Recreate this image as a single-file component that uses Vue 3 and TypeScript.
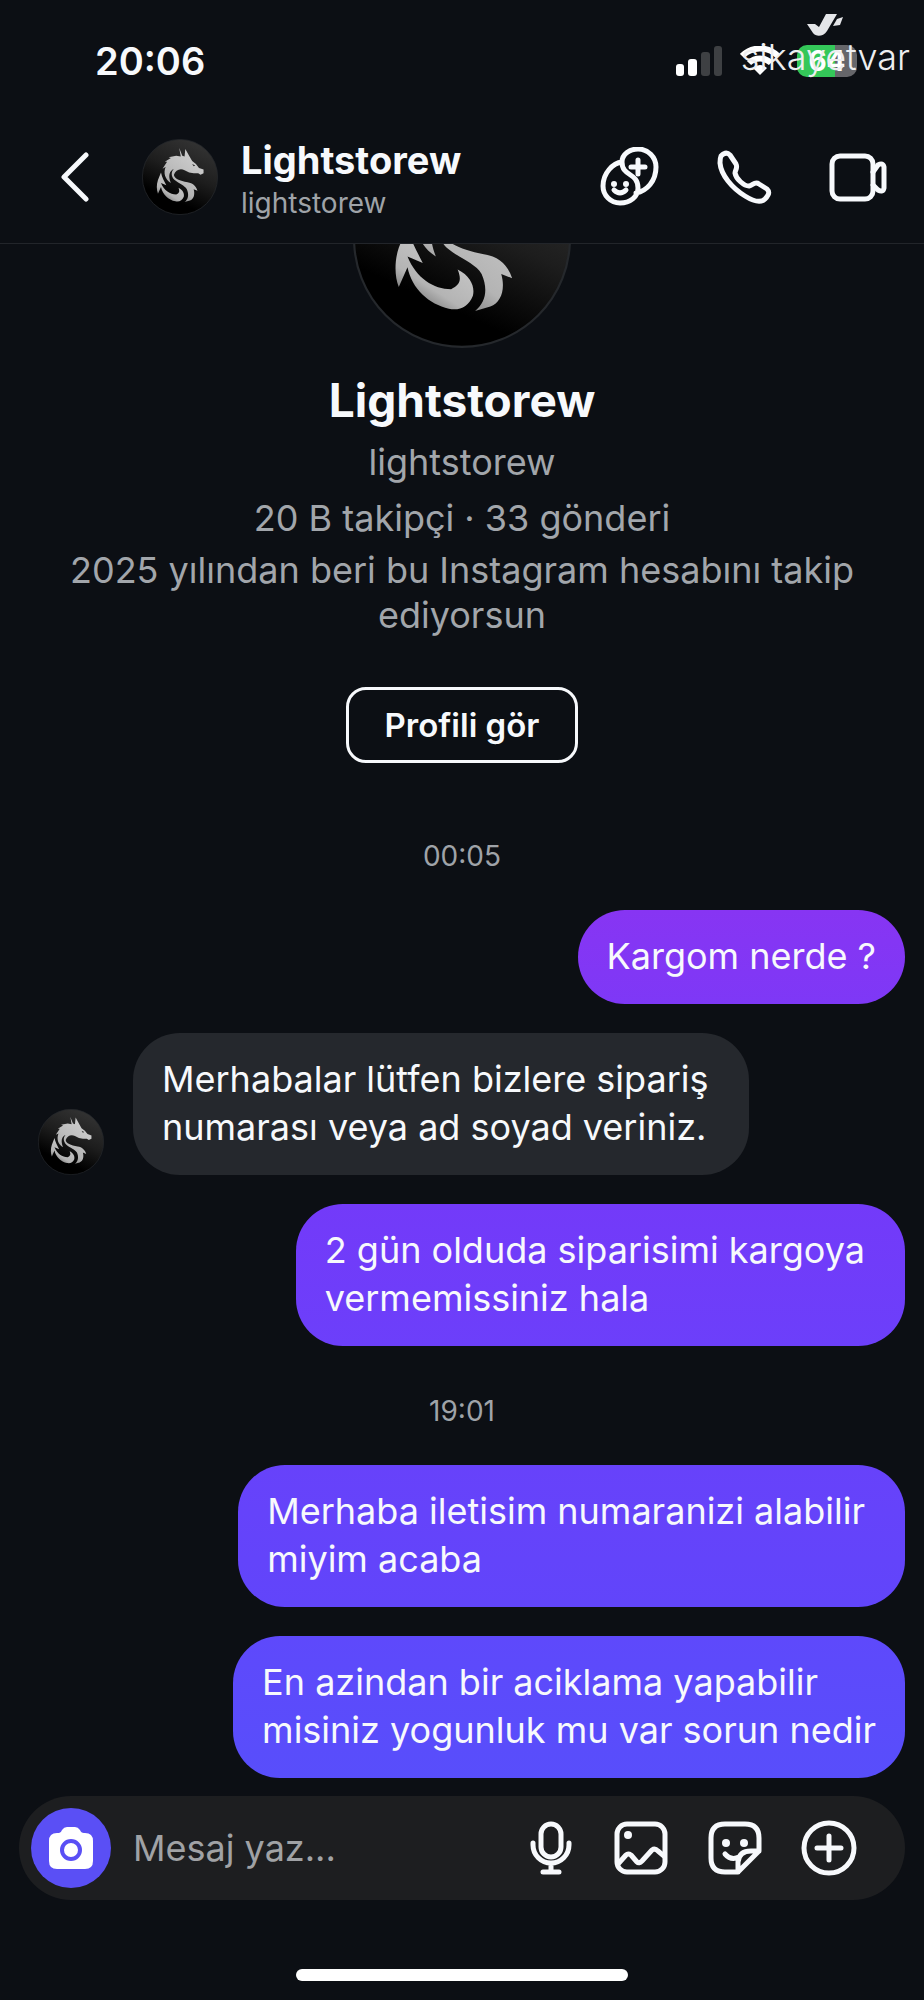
<script setup lang="ts">
import { ref } from 'vue'

interface Message {
  text: string
  mine: boolean
  tone: string
  roomy?: boolean
}
interface Group {
  time: string
  messages: Message[]
}

const draft = ref('')

const groups: Group[] = [
  {
    time: '00:05',
    messages: [
      { text: 'Kargom nerde ?', mine: true, tone: 'violet' },
      { text: 'Merhabalar lütfen bizlere sipariş\nnumarası veya ad soyad veriniz.', mine: false, tone: 'gray', roomy: true },
      { text: '2 gün olduda siparisimi kargoya\nvermemissiniz hala', mine: true, tone: 'purple', roomy: true },
    ],
  },
  {
    time: '19:01',
    messages: [
      { text: 'Merhaba iletisim numaranizi alabilir\nmiyim acaba', mine: true, tone: 'indigo', roomy: true },
      { text: 'En azindan bir aciklama yapabilir\nmisiniz yogunluk mu var sorun nedir', mine: true, tone: 'blue' },
    ],
  },
]
</script>

<template>
  <div class="phone">
    <svg class="defs" aria-hidden="true">
      <defs>
        <linearGradient id="disc" x1="0.75" y1="0" x2="0.3" y2="1">
          <stop offset="0" stop-color="#353535" />
          <stop offset="0.45" stop-color="#1d1d1d" />
          <stop offset="0.8" stop-color="#000" />
        </linearGradient>
        <linearGradient id="silver" x1="0.8" y1="0" x2="0.2" y2="1">
          <stop offset="0" stop-color="#d2d2d2" />
          <stop offset="0.7" stop-color="#b4b4b4" />
          <stop offset="1" stop-color="#666" />
        </linearGradient>
        <symbol id="dragon" viewBox="0 0 100 100">
          <circle cx="50" cy="50" r="49.5" fill="url(#disc)" stroke="#25282c" stroke-width="1" />
          <g fill="url(#silver)">
            <path d="M49 12 53 22 56 23 57 13 62 22 66 29 71 33 75 38 81 40 81 45 77 47 74 45 68 45 62 44 56 41C50 38 44 41 42 47 42 52 50 55 60 57 67 58 71 62 73 68L68 66C70 73 68 79 63 81L56 83C61 79 62 73 59 66 56 61 49 59 43 54 38 49 38 43 42 39 36 42 34 48 38 58 30 53 28 45 31 37L27 39 33 30 30 30 38 25 35 24 45 22 51 23Z" />
            <path d="M25 44C26 50 29 55 32 61L25 58C29 68 37 73 45 73 49 71 50 69 48 64 54 67 56 72 55 76 53 81 49 83 44 82 35 80 27 73 25 63L21 72C19 67 19 60 21 54Z" />
          </g>
          <path d="M66 33 70 35 68 36Z" fill="#222" />
        </symbol>
      </defs>
    </svg>

    <div class="status">
      <span class="clock">20:06</span>
      <div class="indicators">
        <svg class="signal" viewBox="0 0 48 32" aria-label="Signal">
          <rect x="1" y="19" width="8" height="12" rx="3" fill="#fff" />
          <rect x="13" y="14" width="9" height="17" rx="3" fill="#fff" />
          <rect x="26" y="7" width="9" height="24" rx="3" fill="#3e4043" />
          <rect x="39" y="1" width="8" height="30" rx="3" fill="#3e4043" />
        </svg>
        <svg class="wifi" viewBox="0 0 40 30" aria-label="Wi-Fi">
          <g fill="none" stroke="#fff" stroke-width="6">
            <path d="M2 10C12 0 28 0 38 10" />
            <path d="M9 17C15 11 25 11 31 17" />
          </g>
          <path d="M13 22Q20 16 27 22L20 29Z" fill="#fff" />
        </svg>
        <span class="battery">64</span>
      </div>
      <div class="watermark">
        <svg class="mark" viewBox="0 0 38 24" aria-hidden="true">
          <path d="M1 11H9L13 14 20 1H31L21 18C17 24 10 24 7 20Z" fill="#e4e5e8" />
          <path d="M31 6 37 4 34 12 27 13Z" fill="#e4e5e8" />
        </svg>
        <span>sikayetvar</span>
      </div>
    </div>

    <header class="header">
      <button class="icon back" aria-label="Geri">
        <svg viewBox="0 0 28 50"><path d="M25 3 3 25 25 47" /></svg>
      </button>
      <svg class="avatar"><use href="#dragon" /></svg>
      <div class="who">
        <h1>Lightstorew</h1>
        <p>lightstorew</p>
      </div>
      <div class="actions">
        <button class="icon" aria-label="Çıkartma">
          <svg viewBox="0 0 60 60">
            <path d="M22 15C22 7 30 2 38 2A18 18 0 0 1 56 20C56 34 47 44 36 46M22 15C13 16 3 26 3 39A17 17 0 0 0 20 56C30 56 38 50 38 41 38 25 22 30 22 15Z" />
            <path d="M38 13V27M31 20H45M14 43Q20 49 26 43" />
            <circle class="dot" cx="14" cy="37" r="3" /><circle class="dot" cx="26" cy="37" r="3" />
          </svg>
        </button>
        <button class="icon" aria-label="Sesli arama">
          <svg viewBox="0 0 60 60"><path d="M7 9C10 6 13 5 16 8L22 17C24 21 21 23 21 26 22 32 30 39 35 39 39 38 41 34 45 37L53 42C56 45 55 48 51 52 47 56 39 54 31 49 18 41 7 28 6 16Q6 11 7 9Z" /></svg>
        </button>
        <button class="icon" aria-label="Görüntülü arama">
          <svg viewBox="0 0 60 60"><rect x="4" y="9" width="41" height="43" rx="8" /><path d="M45 25 50 18Q55 15 56 20V41Q55 46 50 43L45 38" /></svg>
        </button>
      </div>
    </header>

    <main class="thread">
      <section class="profile">
        <svg class="portrait"><use href="#dragon" /></svg>
        <h2>Lightstorew</h2>
        <p class="handle">lightstorew</p>
        <p class="stats">20 B takipçi · 33 gönderi</p>
        <p class="since">2025 yılından beri bu Instagram hesabını takip ediyorsun</p>
        <button class="view">Profili gör</button>
      </section>

      <section v-for="group in groups" :key="group.time" class="group">
        <time>{{ group.time }}</time>
        <div v-for="message in group.messages" :key="message.text" class="row" :class="{ mine: message.mine }">
          <svg v-if="!message.mine" class="mini"><use href="#dragon" /></svg>
          <p class="bubble" :class="[message.tone, { roomy: message.roomy }]">{{ message.text }}</p>
        </div>
      </section>
    </main>

    <form class="composer" @submit.prevent>
      <button type="button" class="camera" aria-label="Kamera">
        <svg viewBox="0 0 46 44">
          <path d="M9 7H11Q13 7 14 4 16 1 19 1H27Q30 1 32 4 33 7 36 7H37Q45 7 45 15V35Q45 43 37 43H9Q1 43 1 35V15Q1 7 9 7Z" fill="#fff" />
          <circle cx="23" cy="24" r="9" fill="#fff" stroke="#5a4ff5" stroke-width="4" />
        </svg>
      </button>
      <input v-model="draft" type="text" placeholder="Mesaj yaz..." aria-label="Mesaj yaz" />
      <div class="tools">
        <button type="button" class="icon" aria-label="Sesli mesaj">
          <svg viewBox="0 0 60 60"><rect x="24" y="6" width="20" height="33" rx="10" /><path d="M16 25V27A18 18 0 0 0 52 27V25M34 45V53M26 54H42" /></svg>
        </button>
        <button type="button" class="icon" aria-label="Fotoğraf">
          <svg viewBox="0 0 60 60"><rect x="6" y="6" width="48" height="48" rx="10" /><path d="M7 46 15 37Q17 35 20 37L26 44Q28 46 31 43L41 32Q44 30 47 33L53 38" /><circle class="dot" cx="17" cy="17" r="4" /></svg>
        </button>
        <button type="button" class="icon" aria-label="Çıkartma ekle">
          <svg viewBox="0 0 60 60"><path d="M33 54H20Q6 54 6 40V20Q6 6 20 6H40Q54 6 54 20V33L33 54ZM33 54V44Q34 33 46 33H54M20 36Q26 43 34 39" /><circle class="dot" cx="21" cy="25" r="4" /><circle class="dot" cx="39" cy="25" r="4" /></svg>
        </button>
        <button type="button" class="icon" aria-label="Daha fazla">
          <svg viewBox="0 0 60 60"><circle cx="30" cy="30" r="25" /><path d="M30 18V42M18 30H42" /></svg>
        </button>
      </div>
    </form>
    <div class="home"></div>
  </div>
</template>

<style>
body {
  background: #0c0f14;
}
</style>

<style scoped>
* {
  box-sizing: border-box;
}
.phone {
  display: flex;
  flex-direction: column;
  min-height: 100vh;
  background: #0c0f14;
  color: #f7f9fc;
  font-family: Inter, "Liberation Sans", sans-serif;
}
h1,
h2,
p {
  margin: 0;
}
button {
  padding: 0;
  border: 0;
  background: none;
  color: inherit;
  font: inherit;
}
svg {
  display: block;
}
.defs {
  position: absolute;
  width: 0;
  height: 0;
}
.status {
  position: relative;
  display: flex;
  justify-content: space-between;
  align-items: center;
  height: 122px;
  padding: 0 67px 0 95px;
}
.clock {
  font-size: 38px;
  font-weight: 600;
}
.indicators {
  display: flex;
  align-items: center;
  gap: 17px;
}
.signal {
  width: 48px;
  height: 32px;
}
.wifi {
  width: 40px;
  height: 30px;
}
.battery {
  width: 60px;
  border-radius: 10px;
  background: linear-gradient(90deg, #34c759 64%, #66666a 64%);
  color: #fff;
  font-size: 28px;
  font-weight: 700;
  line-height: 32px;
  text-align: center;
}
.watermark {
  position: absolute;
  top: 13px;
  right: 14px;
  display: flex;
  flex-direction: column;
  align-items: center;
  color: #eeeef0;
  font-size: 36px;
  font-weight: 300;
  line-height: 40px;
}
.mark {
  width: 38px;
  height: 24px;
}
.header {
  display: flex;
  align-items: center;
  height: 122px;
  padding: 0 36px 12px 61px;
  border-bottom: 1px solid #22252a;
}
.icon svg {
  width: 60px;
  height: 60px;
  fill: none;
  stroke: #f7f9fc;
  stroke-width: 5;
  stroke-linecap: round;
  stroke-linejoin: round;
}
.icon .dot {
  fill: #f7f9fc;
  stroke: none;
}
.back svg {
  width: 28px;
  height: 50px;
}
.avatar {
  width: 76px;
  height: 76px;
  margin: 0 23px 0 53px;
}
.who {
  flex: 1;
  padding-top: 8px;
}
.who h1 {
  font-size: 38px;
  font-weight: 700;
  line-height: 44px;
}
.who p {
  color: #9fa3a8;
  font-size: 28px;
  line-height: 42px;
}
.actions {
  display: flex;
  gap: 54px;
}
.thread {
  flex: 1;
  overflow: hidden;
  padding: 0 19px 17px;
}
.profile {
  display: flex;
  flex-direction: column;
  align-items: center;
  color: #a2a6ab;
  font-size: 36px;
  line-height: 45px;
  text-align: center;
}
.portrait {
  width: 218px;
  height: 218px;
  margin-top: -114px;
}
.profile h2 {
  margin-top: 24px;
  color: #f7f9fc;
  font-size: 46px;
  font-weight: 700;
  line-height: 56px;
}
.handle {
  margin-top: 12px;
}
.stats {
  margin-top: 11px;
}
.since {
  max-width: 820px;
  margin-top: 7px;
}
.view {
  height: 76px;
  margin-top: 49px;
  padding: 0 36px;
  border: 3px solid #f7f9fc;
  border-radius: 20px;
  color: #f7f9fc;
  font-size: 33px;
  font-weight: 600;
}
.group {
  display: flex;
  flex-direction: column;
  gap: 29px;
}
.profile + .group {
  padding-top: 28px;
}
time {
  margin: 47px 0 7px;
  color: #9fa3a8;
  font-size: 28px;
  line-height: 36px;
  text-align: center;
}
.row {
  display: flex;
  align-items: flex-end;
  gap: 29px;
  padding-left: 19px;
}
.mine {
  justify-content: flex-end;
}
.mini {
  width: 66px;
  height: 66px;
}
.bubble {
  padding: 22px 29px 24px;
  border-radius: 47px;
  font-size: 36px;
  line-height: 48px;
  white-space: pre-line;
}
.roomy {
  padding-right: 40px;
}
.violet {
  background: linear-gradient(#8735f3, #7e38f6);
}
.gray {
  background: #25282d;
}
.purple {
  background: linear-gradient(#733af9, #6c3ffa);
}
.indigo {
  background: linear-gradient(#6742fa, #6145fa);
}
.blue {
  background: linear-gradient(#5e49fb, #584efb);
}
.composer {
  display: flex;
  align-items: center;
  height: 104px;
  margin: 0 19px;
  padding: 0 46px 0 12px;
  border-radius: 52px;
  background: #1d1e20;
}
.camera {
  display: flex;
  align-items: center;
  justify-content: center;
  width: 80px;
  height: 80px;
  border-radius: 50%;
  background: #5a4ff5;
}
.camera svg {
  width: 46px;
  height: 44px;
}
.composer input {
  flex: 1;
  min-width: 0;
  padding: 0 22px;
  border: 0;
  outline: 0;
  background: none;
  color: #f7f9fc;
  font: inherit;
  font-size: 36px;
}
.composer input::placeholder {
  color: #a0a2a5;
  opacity: 1;
}
.tools {
  display: flex;
  gap: 34px;
}
.home {
  width: 36%;
  height: 12px;
  margin: 69px auto 19px;
  border-radius: 6px;
  background: #fff;
}
</style>
